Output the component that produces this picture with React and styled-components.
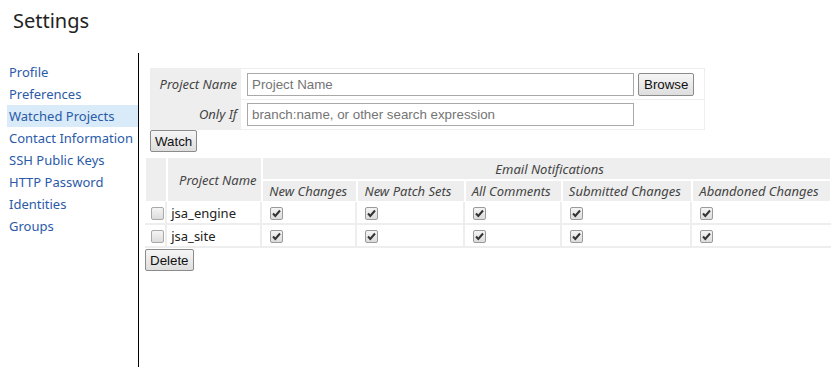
import React from 'react';
import styled, {createGlobalStyle} from 'styled-components';

const GlobalStyle = createGlobalStyle`
  body {
    margin: 0;
    background: #fff;
    font-family: "Noto Sans", "Open Sans", sans-serif;
    font-size: 13px;
    color: #222;
  }
`

const Title = styled.h1`
  margin: 0;
  padding: 7px 0 0 13px;
  height: 53px;
  box-sizing: border-box;
  font-size: 20px;
  font-weight: 400;
  color: #222;
`
const Body = styled.div`
  display: flex;
  min-height: calc(100vh - 53px);
`
const Sidebar = styled.nav`
  width: 131px;
  padding: 8px 0 0 7px;
  border-right: 1px solid #000;
  display: flex;
  flex-direction: column;
`
const NavItem = styled.a`
  display: block;
  height: 22px;
  line-height: 22px;
  padding-left: 2px;
  color: #2a5aa8;
  text-decoration: none;
  white-space: nowrap;
  background: ${p => (p.$active ? '#d9eaf8' : 'transparent')};
`
const Content = styled.main`
  flex: 1;
  padding: 15px 0 0 6px;
`
const FormBlock = styled.div`
  padding-left: 5px;
`
const FormTable = styled.table`
  border-collapse: collapse;
  border: 1px solid #eee;
`
const Label = styled.td`
  width: 82px;
  padding: 0 4px;
  background: #eee;
  text-align: right;
  font-style: italic;
  color: #444;
  white-space: nowrap;
`
const Field = styled.td`
  padding: ${p => (p.$first ? '4px 10px 3px 6px' : '3px 10px 3px 6px')};
  border-bottom: 1px solid #eee;
`
const FieldRow = styled.div`
  display: flex;
  gap: 4px;
`
const TextInput = styled.input`
  width: 387px;
  height: 23px;
  box-sizing: border-box;
  padding: 1px 4px;
  border: 1px solid #a9a9a9;
  font-family: "Liberation Sans", Arial, sans-serif;
  font-size: 13.33px;
  color: #222;
  &::placeholder { color: #757575; }
`
const Button = styled.button`
  height: ${p => (p.$tall ? '23px' : '22px')};
  padding: 0 ${p => (p.$tall ? '5px' : '4px')};
  border: 1px solid #8b8b8b;
  border-radius: 2px;
  background: linear-gradient(#f6f6f6, #dedede);
  font-family: "Liberation Sans", Arial, sans-serif;
  font-size: 13.33px;
  color: #111;
  margin-top: ${p => p.$mt || '0'};
`
const WatchTable = styled.table`
  margin-top: 5px;
  border-collapse: separate;
  border-spacing: 0;
  width: 686px;
`
const Head = styled.th`
  background: #eee;
  border: 1px solid #fff;
  font-weight: 400;
  font-style: italic;
  color: #444;
  text-align: ${p => p.$align || 'left'};
  padding: 0 0 0 6px;
  height: ${p => p.$h || '20px'};
  box-sizing: border-box;
  white-space: nowrap;
`
const Cell = styled.td`
  height: 23px;
  box-sizing: border-box;
  padding: 0 0 0 ${p => p.$pl || '8px'};
  border-right: 2px solid #eee;
  border-bottom: 2px solid #eee;
  white-space: nowrap;
  vertical-align: middle;
  &:last-child { border-right: none; }
`
const Box = styled.span`
  display: inline-block;
  width: 11px;
  height: 11px;
  border: 1px solid ${p => (p.$checked ? '#9a9a9a' : '#a8a8a8')};
  border-radius: 2px;
  background: linear-gradient(#f4f4f4, #dcdcdc);
  vertical-align: middle;
  position: relative;
  top: -1px;
  svg { display: block; }
`

const Check = ({checked}) => (
  <Box $checked={checked}>
    {checked && (
      <svg width="11" height="11" viewBox="0 0 11 11">
        <path d="M2 5.5 L4.3 8 L9 2.5" fill="none" stroke="#333" strokeWidth="2" />
      </svg>
    )}
  </Box>
);

const menu = [
  'Profile', 'Preferences', 'Watched Projects', 'Contact Information',
  'SSH Public Keys', 'HTTP Password', 'Identities', 'Groups',
];
const columns = ['New Changes', 'New Patch Sets', 'All Comments', 'Submitted Changes', 'Abandoned Changes'];
const widths = [94, 106, 96, 129, 137];
const projects = ['jsa_engine', 'jsa_site'];

export default function App() {
  return (
    <>
      <GlobalStyle/>
      <Title>Settings</Title>
      <Body>
        <Sidebar>
          {menu.map(m => (
            <NavItem key={m} href="#" $active={m === 'Watched Projects'}>{m}</NavItem>
          ))}
        </Sidebar>
        <Content>
          <FormBlock>
            <FormTable>
              <tbody>
                <tr>
                  <Label>Project Name</Label>
                  <Field $first>
                    <FieldRow>
                      <TextInput placeholder="Project Name"/>
                      <Button $tall>Browse</Button>
                    </FieldRow>
                  </Field>
                </tr>
                <tr>
                  <Label>Only If</Label>
                  <Field>
                    <TextInput placeholder="branch:name, or other search expression"/>
                  </Field>
                </tr>
              </tbody>
            </FormTable>
            <Button>Watch</Button>
          </FormBlock>
          <WatchTable>
            <thead>
              <tr>
                <Head rowSpan={2} style={{width: 22}}/>
                <Head rowSpan={2} $align="center" style={{width: 94}}>Project Name</Head>
                <Head colSpan={5} $align="center" $h="23px">Email Notifications</Head>
              </tr>
              <tr>
                {columns.map((c, i) => (
                  <Head key={c} $h="22px" style={{width: widths[i]}}>{c}</Head>
                ))}
              </tr>
            </thead>
            <tbody>
              {projects.map(p => (
                <tr key={p}>
                  <Cell $pl="6px"><Check/></Cell>
                  <Cell $pl="4px">{p}</Cell>
                  {columns.map(c => (
                    <Cell key={c}><Check checked/></Cell>
                  ))}
                </tr>
              ))}
            </tbody>
          </WatchTable>
          <Button $mt="1px">Delete</Button>
        </Content>
      </Body>
    </>
  );
}
